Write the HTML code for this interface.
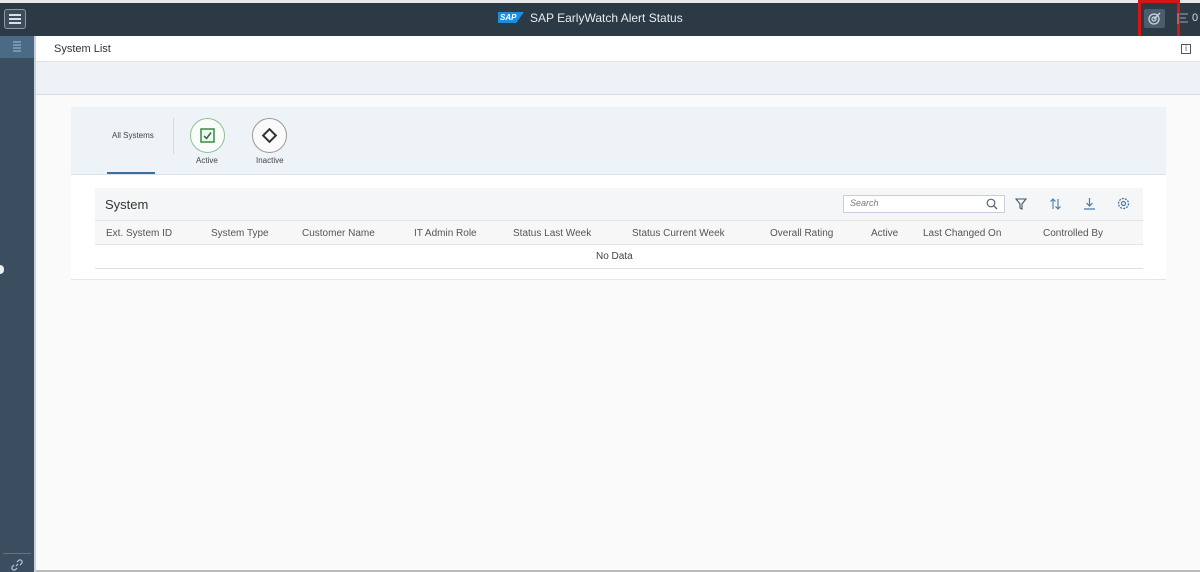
<!DOCTYPE html>
<html><head><style>
*{margin:0;padding:0;box-sizing:border-box}
body{width:1200px;height:572px;overflow:hidden;background:#fafafa;font-family:"Liberation Sans",sans-serif;position:relative;color:#32363a}
.a{position:absolute}
.th{position:absolute;top:228px;font-size:10px;color:#555}
</style></head><body>
<div class="a" style="left:0;top:0;width:1200px;height:3px;background:#e8e8e8"></div>
<div class="a" style="left:0;top:3px;width:1200px;height:33px;background:#2c3a45"></div>
<div class="a" style="left:4px;top:9px;width:22px;height:20px;border:1px solid #8a9aa8;border-radius:3px;background:#3d4d5a"></div>
<div class="a" style="left:9px;top:14px;width:12px;height:2px;background:#dde;box-shadow:0 4px 0 #dde,0 8px 0 #dde"></div>
<div class="a" style="left:498px;top:12px;width:26px;height:11px;background:#1a8ee0;clip-path:polygon(0 0,100% 0,70% 100%,0 100%);color:#fff;font-size:8px;font-weight:bold;font-style:italic;line-height:11px;padding-left:2px">SAP</div>
<div class="a" style="left:530px;top:11px;font-size:12px;color:#e8ecf0">SAP EarlyWatch Alert Status</div>
<div class="a" style="left:1144px;top:9px;width:21px;height:19px;background:#4a5d6c;border-radius:2px"></div>
<svg class="a" style="left:1148px;top:12px" width="13" height="13" viewBox="0 0 13 13"><circle cx="6" cy="7" r="5" fill="none" stroke="#cdd6de" stroke-width="1.3"/><circle cx="6" cy="7" r="2" fill="none" stroke="#cdd6de" stroke-width="1.2"/><path d="M6 7L12 1" stroke="#cdd6de" stroke-width="1.3"/></svg>
<div class="a" style="left:1138px;top:0;width:42px;height:41px;border:3px solid #d41616"></div>
<svg class="a" style="left:1177px;top:13px" width="12" height="11" viewBox="0 0 12 11"><path d="M1 0V11M3 1H11M3 5H9M3 9H11" stroke="#9aa8b4" stroke-width="1"/></svg>
<div class="a" style="left:1192px;top:12px;font-size:11px;color:#ddd">0</div>
<div class="a" style="left:0;top:36px;width:34px;height:536px;background:#3b4e60"></div>
<div class="a" style="left:0;top:36px;width:34px;height:22px;background:#4a6a85"></div>
<svg class="a" style="left:12px;top:41px" width="10" height="12" viewBox="0 0 10 12"><path d="M1 1H9M1 4H9M1 7H9M1 10H9" stroke="#8fb0cc" stroke-width="1.2"/></svg>
<div class="a" style="left:0;top:265px;width:4px;height:9px;background:#eee;border-radius:0 5px 5px 0"></div>
<div class="a" style="left:3px;top:553px;width:28px;height:1px;background:#4c7aa6"></div>
<svg class="a" style="left:11px;top:559px" width="12" height="12" viewBox="0 0 12 12"><path d="M5 7L7 5M3 6L1.5 7.5a2 2 0 0 0 3 3L6 9M9 6L10.5 4.5a2 2 0 0 0-3-3L6 3" fill="none" stroke="#bcd" stroke-width="1.2"/></svg>
<div class="a" style="left:34px;top:36px;width:2px;height:536px;background:#c8d0d8"></div>
<div class="a" style="left:36px;top:36px;width:1164px;height:26px;background:#fff;border-bottom:1px solid #dde3ea"></div>
<div class="a" style="left:54px;top:43px;font-size:11px;color:#333">System List</div>
<div class="a" style="left:1181px;top:44px;width:10px;height:10px;border:1px solid #556;font-size:8px;line-height:8px;text-align:center;color:#445">i</div>
<div class="a" style="left:36px;top:62px;width:1164px;height:33px;background:#eef2f6;border-bottom:1px solid #d4dde8"></div>
<div class="a" style="left:71px;top:107px;width:1095px;height:173px;background:#fff;border-bottom:1px solid #dfe6ee"></div>
<div class="a" style="left:71px;top:107px;width:1095px;height:68px;background:#eef3f8;border-bottom:1px solid #d8e2ec"></div>
<div class="a" style="left:112px;top:131px;font-size:8px;color:#444">All Systems</div>
<div class="a" style="left:107px;top:172px;width:48px;height:2px;background:#3d6f9a"></div>
<div class="a" style="left:173px;top:118px;width:1px;height:36px;background:#d4dae0"></div>
<div class="a" style="left:190px;top:118px;width:35px;height:35px;border:1px solid #8fbf94;border-radius:50%;background:#fafcfa"></div>
<svg class="a" style="left:200px;top:128px" width="15" height="15" viewBox="0 0 15 15"><rect x="1" y="1" width="13" height="13" fill="#eef8ee" stroke="#3a8a48" stroke-width="1.5"/><path d="M4 8L6.5 10.5L11 4.5" fill="none" stroke="#2a6a35" stroke-width="1.5"/></svg>
<div class="a" style="left:196px;top:156px;font-size:8px;color:#444">Active</div>
<div class="a" style="left:252px;top:118px;width:35px;height:35px;border:1px solid #999;border-radius:50%;background:#fafafa"></div>
<div class="a" style="left:264px;top:130px;width:11px;height:11px;border:2px solid #333;transform:rotate(45deg)"></div>
<div class="a" style="left:256px;top:156px;font-size:8px;color:#444">Inactive</div>
<div class="a" style="left:95px;top:188px;width:1048px;height:33px;background:#f5f6f7;border-bottom:1px solid #e2e4e6"></div>
<div class="a" style="left:105px;top:197px;font-size:13px;color:#333">System</div>
<div class="a" style="left:843px;top:195px;width:162px;height:18px;background:#fff;border:1px solid #ccd"></div>
<div class="a" style="left:850px;top:198px;font-size:9px;font-style:italic;color:#777">Search</div>
<svg class="a" style="left:986px;top:198px" width="12" height="12" viewBox="0 0 12 12"><circle cx="5" cy="5" r="3.8" fill="none" stroke="#567" stroke-width="1.2"/><path d="M8 8L11 11" stroke="#567" stroke-width="1.3"/></svg>
<svg class="a" style="left:1015px;top:198px" width="12" height="12" viewBox="0 0 12 12"><path d="M1 1H11L7 6V11L5 10V6Z" fill="none" stroke="#456" stroke-width="1.1"/></svg>
<svg class="a" style="left:1049px;top:198px" width="13" height="12" viewBox="0 0 13 12"><path d="M4 11V1M1.5 3.5L4 1L6.5 3.5M9 1V11M6.5 8.5L9 11L11.5 8.5" fill="none" stroke="#4a78a8" stroke-width="1.1"/></svg>
<svg class="a" style="left:1083px;top:197px" width="13" height="14" viewBox="0 0 13 14"><path d="M6.5 1V9M3.5 6L6.5 9L9.5 6M1 12H12" fill="none" stroke="#4a78a8" stroke-width="1.2"/></svg>
<svg class="a" style="left:1117px;top:197px" width="13" height="13" viewBox="0 0 13 13"><circle cx="6.5" cy="6.5" r="5" fill="none" stroke="#4a78a8" stroke-width="1.3" stroke-dasharray="2 1.1"/><circle cx="6.5" cy="6.5" r="2" fill="none" stroke="#4a78a8" stroke-width="1.2"/></svg>
<div class="a" style="left:95px;top:221px;width:1048px;height:24px;background:#f7f7f7;border-bottom:1px solid #e4e4e4"></div>
<div class="th" style="left:106px">Ext. System ID</div>
<div class="th" style="left:211px">System Type</div>
<div class="th" style="left:302px">Customer Name</div>
<div class="th" style="left:414px">IT Admin Role</div>
<div class="th" style="left:513px">Status Last Week</div>
<div class="th" style="left:632px">Status Current Week</div>
<div class="th" style="left:770px">Overall Rating</div>
<div class="th" style="left:871px">Active</div>
<div class="th" style="left:923px">Last Changed On</div>
<div class="th" style="left:1043px">Controlled By</div>
<div class="a" style="left:95px;top:268px;width:1048px;height:1px;background:#e0e0e0"></div>
<div class="a" style="left:596px;top:251px;font-size:10px;color:#444">No Data</div>
<div class="a" style="left:36px;top:570px;width:1164px;height:2px;background:#bbb"></div>
</body></html>
